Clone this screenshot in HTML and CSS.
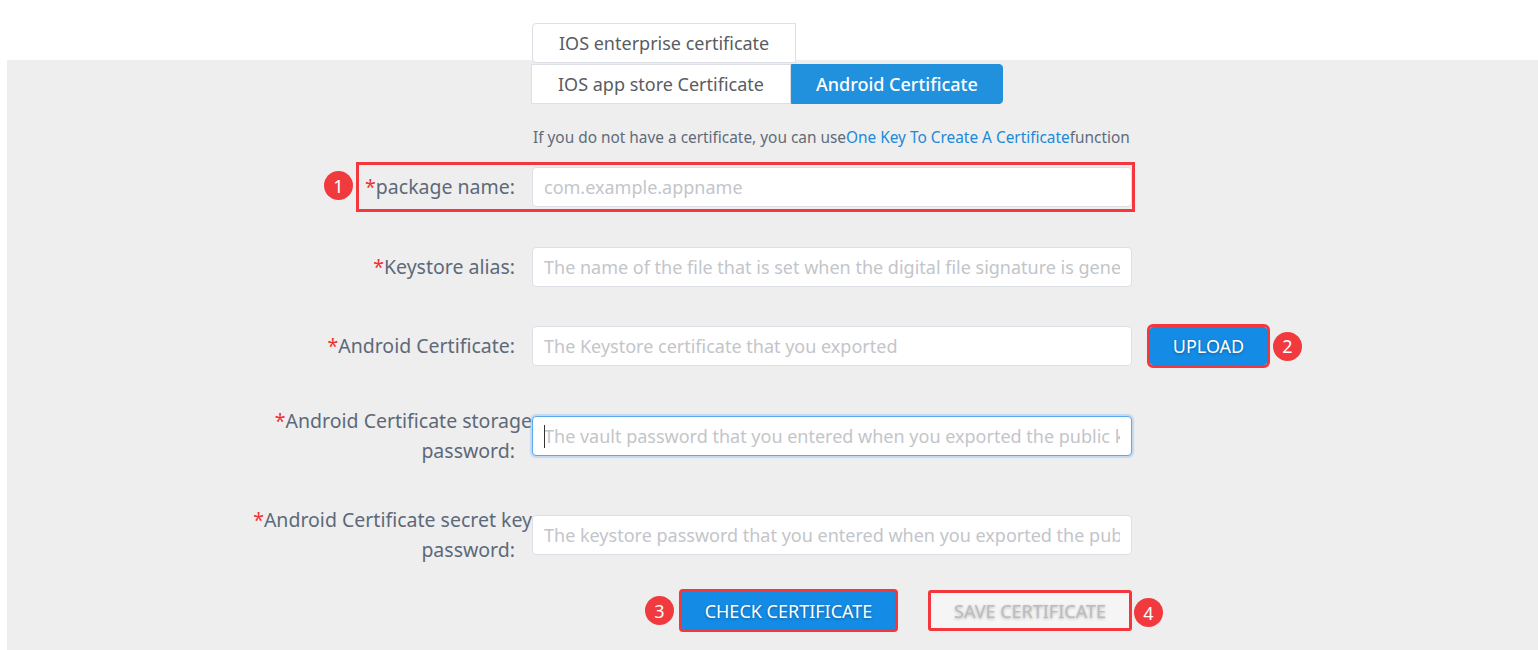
FILE: index.html
```html
<!DOCTYPE html>
<html lang="en">
<head>
<meta charset="utf-8">
<title>Android Certificate</title>
<link rel="stylesheet" href="styles.css">
</head>
<body>
<div class="panel">
  <div class="tabs">
    <div class="tab first">IOS enterprise certificate</div>
    <div class="tab">IOS app store Certificate</div>
    <div class="tab active last">Android Certificate</div>
  </div>
  <p class="note">If you do not have a certificate, you can use<a class="link">One Key To Create A Certificate</a>function</p>
  <div class="form">
    <div class="row">
      <span class="mark-box"></span>
      <span class="badge badge-1">1</span>
      <label class="label"><span class="req">*</span>package name:</label>
      <input class="input" type="text" placeholder="com.example.appname">
    </div>
    <div class="row">
      <label class="label"><span class="req">*</span>Keystore alias:</label>
      <input class="input" type="text" placeholder="The name of the file that is set when the digital file signature is generated">
    </div>
    <div class="row">
      <label class="label"><span class="req">*</span>Android Certificate:</label>
      <input class="input" type="text" placeholder="The Keystore certificate that you exported">
      <div class="extra">
        <button class="btn btn-upload" type="button">UPLOAD</button>
        <span class="badge badge-inline">2</span>
      </div>
    </div>
    <div class="row">
      <label class="label"><span class="ov"><span class="req">*</span>Android Certificate storage</span><br>password:</label>
      <div class="field-wrap">
        <input class="input focused" type="text" placeholder="The vault password that you entered when you exported the public key">
        <span class="caret"></span>
      </div>
    </div>
    <div class="row">
      <label class="label"><span class="ov"><span class="req">*</span>Android Certificate secret key</span><br>password:</label>
      <input class="input" type="text" placeholder="The keystore password that you entered when you exported the public key">
    </div>
  </div>
  <div class="actions">
    <div class="act">
      <span class="badge badge-left">3</span>
      <button class="btn btn-check" type="button">CHECK CERTIFICATE</button>
    </div>
    <div class="act">
      <button class="btn btn-save" type="button">SAVE CERTIFICATE</button>
      <span class="badge badge-right">4</span>
    </div>
  </div>
</div>
</body>
</html>
```

FILE: styles.css
```css
html, body {
  margin: 0;
  padding: 0;
  background: #ffffff;
  font-family: "Noto Sans", "Open Sans", sans-serif;
}

.panel {
  margin: 60px 0 0 7px;
  height: 590px;
  background: #eeeeee;
  padding-top: 1px;
  box-sizing: border-box;
}

.tabs {
  display: flex;
  flex-wrap: wrap;
  width: 480px;
  row-gap: 1px;
  margin: -38px 0 0 524px;
}

.tab {
  box-sizing: border-box;
  height: 40px;
  line-height: 38px;
  padding: 0 26px;
  border: 1px solid #dcdfe6;
  background: #ffffff;
  color: #585c63;
  font-size: 18px;
  white-space: nowrap;
}

.tab.first {
  margin-left: 1px;
  margin-right: 200px;
  padding: 0 26px;
  border-radius: 4px 0 0 4px;
}

.tab.active {
  background: #2190dd;
  border-color: #2190dd;
  color: #ffffff;
  font-weight: 500;
  padding: 0 24px;
}

.tab.last {
  border-radius: 0 4px 4px 0;
}

.note {
  margin: 24px 0 0 526px;
  font-size: 15.4px;
  line-height: 20px;
  color: #606b78;
  white-space: nowrap;
}

.link {
  color: #2088d8;
}

.form {
  display: flex;
  flex-direction: column;
  gap: 39.5px;
  margin-top: 19px;
}

.row {
  position: relative;
  display: grid;
  grid-template-columns: 525px 600px auto;
  align-items: center;
}

.label {
  box-sizing: border-box;
  padding-right: 17px;
  text-align: right;
  font-size: 19.5px;
  line-height: 30px;
  color: #5d6979;
  white-space: nowrap;
}

.ov {
  margin-right: -17px;
}

.req {
  color: #f42f2f;
}

.input {
  box-sizing: border-box;
  width: 600px;
  height: 40px;
  padding: 0 11px;
  border: 1px solid #dcdfe6;
  border-radius: 4px;
  background: #ffffff;
  font-family: "Noto Sans", "Open Sans", sans-serif;
  font-size: 18px;
  color: #333;
  outline: none;
}

.input::placeholder {
  color: #c3c5ca;
}

.input.focused {
  border-color: #5aa9ef;
  box-shadow: 0 0 1px 2px rgba(120, 180, 240, 0.35);
}

.field-wrap {
  position: relative;
  width: 600px;
  height: 40px;
}

.caret {
  position: absolute;
  left: 12px;
  top: 9px;
  width: 1px;
  height: 23px;
  background: #333;
}

.extra {
  display: flex;
  align-items: center;
  padding-left: 18px;
}

.btn {
  box-sizing: border-box;
  border: none;
  font-family: "Noto Sans", "Open Sans", sans-serif;
  font-size: 18px;
  cursor: pointer;
  padding: 0;
}

.btn-upload {
  width: 117px;
  height: 38px;
  background: #148ce6;
  color: #ffffff;
  text-shadow: 0 1px 3px rgba(0, 0, 0, 0.35);
  border-radius: 3px;
  outline: 3px solid #f3373c;
}

.mark-box {
  position: absolute;
  left: 349px;
  top: -5px;
  width: 779px;
  height: 50px;
  box-sizing: border-box;
  border: 3px solid #f3373c;
  pointer-events: none;
}

.badge {
  display: inline-flex;
  align-items: center;
  justify-content: center;
  width: 29px;
  height: 29px;
  border-radius: 50%;
  background: #f03a3e;
  color: #ffffff;
  font-size: 18px;
  line-height: 1;
}

.badge-1 {
  position: absolute;
  left: 317px;
  top: 4px;
}

.badge-inline {
  margin-left: 6px;
}

.actions {
  display: flex;
  gap: 31px;
  margin: 25px 0 0 673px;
}

.act {
  position: relative;
}

.badge-left {
  position: absolute;
  left: -35px;
  top: 6px;
}

.badge-right {
  position: absolute;
  right: -31px;
  top: 8px;
}

.btn-check {
  width: 217px;
  height: 41px;
  background: #148ce6;
  color: #ffffff;
  border-radius: 3px;
  text-shadow: 0 1px 3px rgba(0, 0, 0, 0.35);
  outline: 3px solid #f3373c;
  outline-offset: -2px;
}

.btn-save {
  width: 204px;
  height: 41px;
  background: #f5f5f5;
  color: #bcbcbc;
  border: 1px solid #dcdfe6;
  border-radius: 3px;
  text-shadow: 0 1px 3px rgba(0, 0, 0, 0.25);
  outline: 3px solid #f3373c;
  outline-offset: -3px;
}
```
